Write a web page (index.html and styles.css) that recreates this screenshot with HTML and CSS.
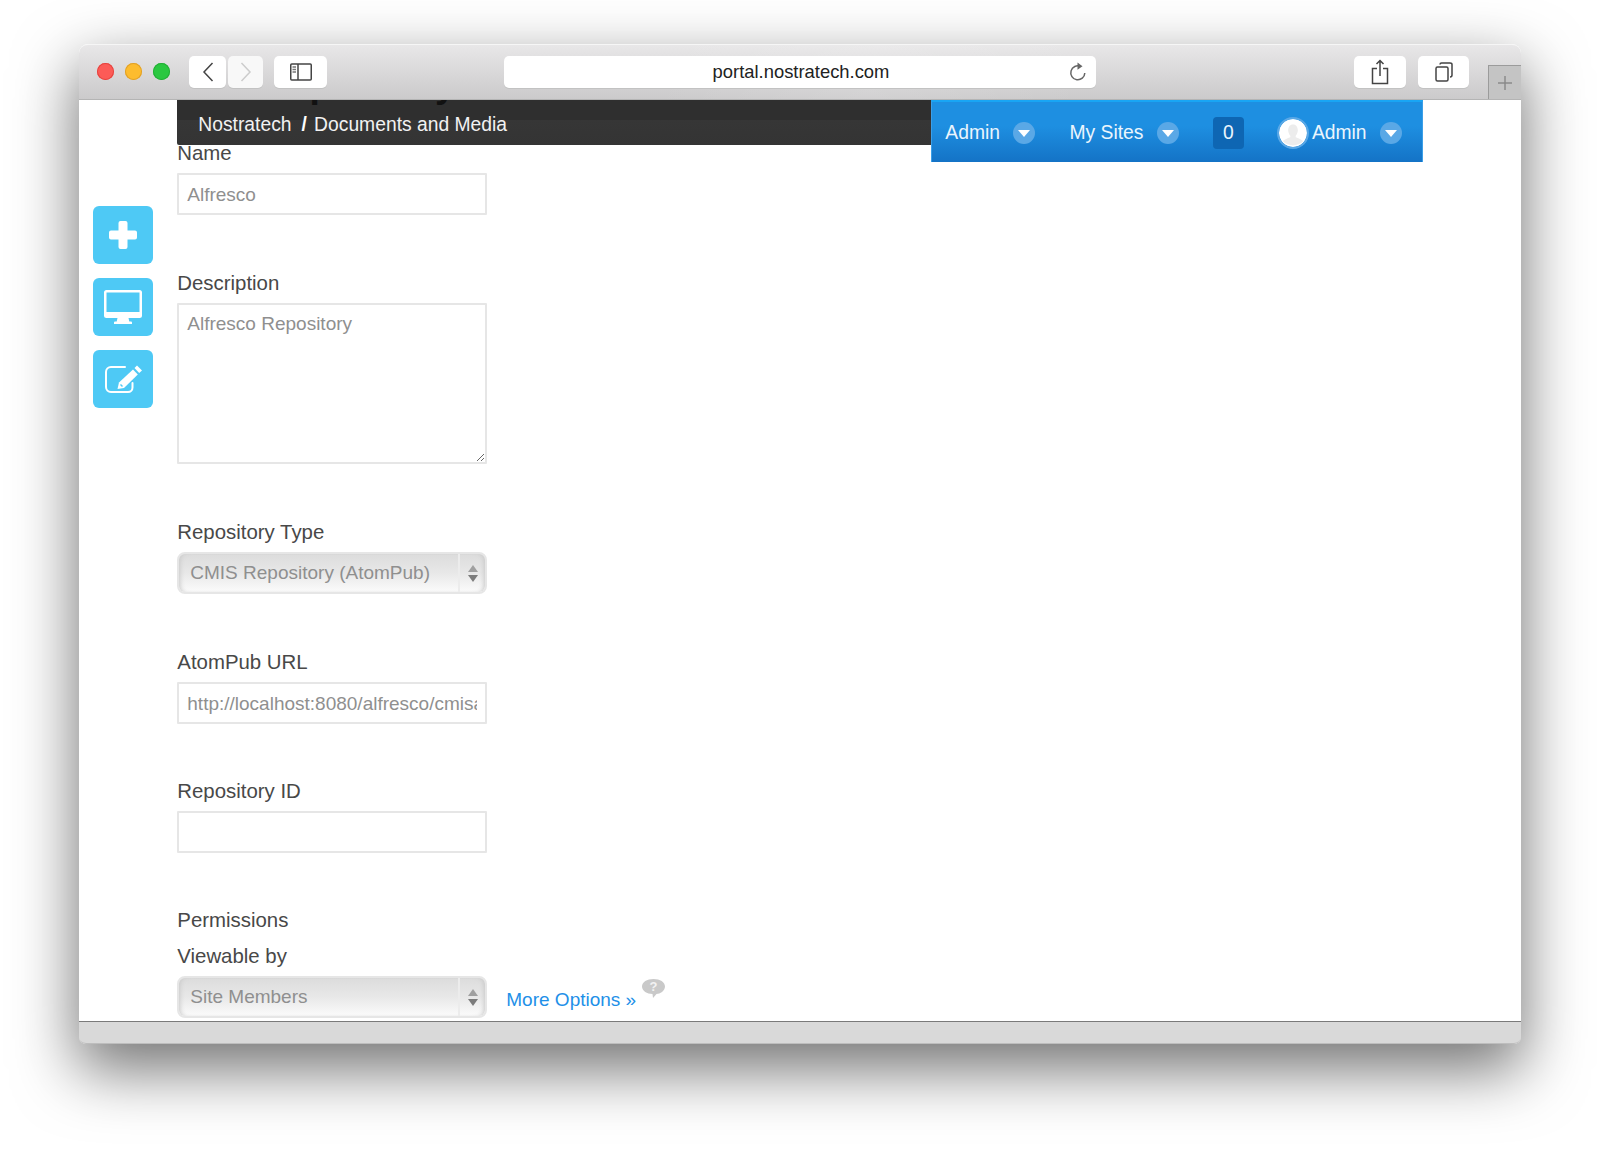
FILE: index.html
```html
<!DOCTYPE html>
<html lang="en">
<head>
<meta charset="utf-8">
<title>portal.nostratech.com</title>
<link rel="stylesheet" href="styles.css">
</head>
<body>
<div class="window">
  <header class="titlebar">
    <div class="lights">
      <span class="light red"></span><span class="light yellow"></span><span class="light green"></span>
    </div>
    <div class="tb-btn back"><svg width="14" height="22" viewBox="0 0 14 22"><path d="M11.5 2 3 11l8.500 9" class="ic" stroke="#444"/></svg></div>
    <div class="tb-btn forward"><svg width="14" height="22" viewBox="0 0 14 22"><path d="M2.500 2 11 11l-8.500 9" class="ic" stroke="#ccc"/></svg></div>
    <div class="tb-btn side"><svg width="22" height="18" viewBox="0 0 22 18"><rect x=".75" y="1" width="20.500" height="16" rx="1" class="ic" stroke="#444"/><path d="M8 1v16" class="ic" stroke="#444"/><path d="M2.500 4H6M2.500 6.500H6M2.500 9H6" class="ic" stroke="#777"/></svg></div>
    <div class="url">
      <span class="url-text">portal.nostratech.com</span>
      <svg class="reload" width="18" height="22" viewBox="0 0 18 22"><path d="M11.500 5.300A7 7 0 1 0 15.800 12" class="ic" stroke="#666" stroke-width="1.300"/><path d="M8.500 1.500 13.500 5.300 8.500 8.800z" fill="#666"/></svg>
    </div>
    <div class="tb-btn share"><svg width="18" height="26" viewBox="0 0 18 26"><path d="M6 9.500H1.500v15h15v-15H12" class="ic" stroke="#444"/><path d="M9 17V1.500M5.500 5 9 1.500 12.500 5" class="ic" stroke="#444"/></svg></div>
    <div class="tb-btn tabs"><svg width="18" height="20" viewBox="0 0 18 20"><rect x="1" y="5" width="12" height="14" rx="1.500" class="ic" stroke="#444"/><path d="M5 2.500Q5 1 6.500 1h8.500Q17 1 17 2.500V13q0 2-2 2" class="ic" stroke="#444"/></svg></div>
    <div class="newtab"><svg width="16" height="16" viewBox="0 0 16 16"><path d="M8 1v14M1 8h14" class="ic" stroke="#8a8a8a"/></svg></div>
  </header>

  <div class="content">
    <main class="main">
      <nav class="sidebtns">
        <a class="sbtn"><svg width="28" height="28" viewBox="0 0 28 28"><path d="M9.500 2a2 2 0 0 1 2-2h5a2 2 0 0 1 2 2v7.500H26a2 2 0 0 1 2 2v5a2 2 0 0 1-2 2H18.500V26a2 2 0 0 1-2 2h-5a2 2 0 0 1-2-2V18.500H2a2 2 0 0 1-2-2v-5a2 2 0 0 1 2-2h7.500z" fill="#fff"/></svg></a>
        <a class="sbtn"><svg width="38" height="34" viewBox="0 0 38 34"><path fill-rule="evenodd" d="M2.500 0h33A2.500 2.500 0 0 1 38 2.500v23a2.500 2.500 0 0 1-2.500 2.500H24.500l.8 3.500H27a1 1 0 0 1 1 1V34H10v-1.500a1 1 0 0 1 1-1h1.700l.8-3.500H2.500A2.500 2.500 0 0 1 0 25.500v-23A2.500 2.500 0 0 1 2.500 0zM2.500 2.500v19.500h33V2.500z" fill="#fff"/></svg></a>
        <a class="sbtn"><svg width="38" height="30" viewBox="0 0 38 30"><path d="M21 3H7a5 5 0 0 0-5 5v15a5 5 0 0 0 5 5h17a4.500 4.500 0 0 0 4.500-4.500V19" fill="none" stroke="#fff" stroke-width="2" stroke-linecap="round"/><path d="M13.500 25 15 18.500 29 5.500l4.800 5L20 24z" fill="#fff"/><path d="M30.500 4 33 1.500l5 5-2.800 2.600z" fill="#fff"/><path d="M16.500 20.500 18.500 22.500" stroke="#4ec9f5" stroke-width="1.500"/></svg></a>
      </nav>

      <form class="form">
        <div class="field field-first">
          <label class="lbl">Name</label>
          <input class="input" type="text" value="Alfresco" readonly>
        </div>
        <div class="field field-area">
          <label class="lbl">Description</label>
          <textarea class="input area" readonly>Alfresco Repository</textarea>
        </div>
        <div class="field field-select">
          <label class="lbl">Repository Type</label>
          <div class="select">
            <span class="select-text">CMIS Repository (AtomPub)</span>
            <span class="select-arrows"><i class="up"></i><i class="down"></i></span>
          </div>
        </div>
        <div class="field">
          <label class="lbl">AtomPub URL</label>
          <input class="input" type="text" value="http://localhost:8080/alfresco/cmisatom" readonly>
        </div>
        <div class="field">
          <label class="lbl">Repository ID</label>
          <input class="input" type="text" value="" readonly>
        </div>
        <div class="perm">Permissions</div>
        <label class="lbl">Viewable by</label>
        <div class="view-row">
          <div class="select">
            <span class="select-text">Site Members</span>
            <span class="select-arrows"><i class="up"></i><i class="down"></i></span>
          </div>
          <a class="more">More Options »</a>
          <svg class="help" width="23" height="19" viewBox="0 0 23 19"><path d="M11.500 0C18 0 23 3 23 7.500S18 15 14.500 15L11 19l-.5-4C5 15 0 12 0 7.500S5 0 11.500 0z" fill="#c9c9c9"/><text x="11.500" y="12" class="help-q">?</text></svg>
        </div>
      </form>
    </main>

    <div class="topbar">
      <div class="crumbs">
        <span class="clipped-title">Repository</span>
        <span class="crumb-text">Nostratech <b class="slash">/</b> Documents and Media</span>
      </div>
      <div class="usernav">
        <span class="nav-text">Admin</span><span class="caret"></span>
        <span class="nav-text gap">My Sites</span><span class="caret"></span>
        <span class="badge">0</span>
        <span class="avatar"><svg width="28" height="28" viewBox="0 0 26 26"><circle cx="13" cy="13" r="13" fill="#fff"/><path d="M13 5c3 0 4.500 2.500 4.500 5.500 0 2-1 4-2 5v1.500c2.500 1 5.500 2 7 3.500A13 13 0 0 1 3.500 20.500c1.500-1.500 4.500-2.500 7-3.500v-1.500c-1-1-2-3-2-5C8.500 7.500 10 5 13 5z" fill="#ececec"/></svg></span>
        <span class="nav-text">Admin</span><span class="caret"></span>
      </div>
    </div>
  </div>
  <footer class="statusbar"></footer>
</div>
</body>
</html>
```
FILE: styles.css
```css
* { box-sizing: border-box; }
html, body { margin: 0; height: 100%; background: #fff; overflow: hidden; }
body { font-family: "Liberation Sans", Arial, sans-serif; }

.window {
  margin: 44px 0 0 79px;
  width: 1442px;
  height: 1000px;
  display: flex;
  flex-direction: column;
  border-radius: 9px 9px 7px 7px;
  box-shadow: 0 24px 62px 2px rgba(0, 0, 0, .55);
  background: #fff;
}

/* title bar */
.titlebar {
  height: 56px;
  flex: none;
  display: flex;
  align-items: center;
  padding: 0 0 1px 18px;
  border-radius: 9px 9px 0 0;
  border-top: 1px solid #f6f6f6;
  border-bottom: 1px solid #b4b4b4;
  background: linear-gradient(100deg, rgba(255,255,255,0) 40%, rgba(255,255,255,.12) 55%, rgba(255,255,255,0) 70%), linear-gradient(180deg, #e8e7e8, #cbcacb);
}
.lights { display: flex; gap: 11px; }
.light { width: 17px; height: 17px; border-radius: 50%; }
.red { background: #fc5b57; box-shadow: inset 0 0 0 1px #e5443f; }
.yellow { background: #fdbc2e; box-shadow: inset 0 0 0 1px #e0a028; }
.green { background: #2ac840; box-shadow: inset 0 0 0 1px #24ae36; }
.tb-btn, .url {
  height: 32px;
  background: #fff;
  border-radius: 5px;
  box-shadow: 0 1px 0 #c2c2c2;
  display: flex;
  align-items: center;
  justify-content: center;
}
.back { width: 37px; margin-left: 19px; }
.forward { width: 35px; margin-left: 2px; background: #f8f8f8; }
.side { width: 53px; margin-left: 11px; }
.url { width: 592px; margin-left: 177px; padding-right: 9px; }
.url-text { flex: 1; text-align: center; font-size: 18.400px; color: #222; padding: 1px 0 0 29px; }
.share { width: 52px; margin-left: 258px; }
.tabs { width: 51px; margin-left: 12px; }
.newtab {
  width: 33px;
  height: 34px;
  margin: 0 0 -1px 19px;
  align-self: flex-end;
  border: 1px solid #9b9b9b;
  border-width: 1px 0 0 1px;
  background: #c4c4c4;
  display: flex;
  align-items: center;
  justify-content: center;
}
.ic { fill: none; stroke-width: 1.500; }

/* page */
.content { flex: 1; position: relative; min-height: 0; overflow: hidden; background: #fff; }
.main { display: flex; height: 100%; padding-left: 14px; }
.sidebtns { width: 60px; flex: none; margin: 106px 24.300px 0 0; display: flex; flex-direction: column; gap: 14px; }
.sbtn {
  height: 58px;
  border-radius: 6px;
  background: #4ec9f5;
  display: flex;
  align-items: center;
  justify-content: center;
}
.form { width: 310px; flex: none; padding-top: 41px; }
.field { margin-bottom: 55px; display: flex; flex-direction: column; }
.field-first { margin-bottom: 56px; }
.field-area { margin-bottom: 56px; }
.field-select { margin-bottom: 56px; }
.lbl, .perm { display: block; font-size: 20.400px; line-height: 24px; color: #484848; height: 24px; margin-bottom: 8px; }
.perm { margin-bottom: 12px; }
.input {
  display: block;
  width: 310px;
  height: 42px;
  border: 2px solid #e6e6e6;
  border-radius: 1px;
  padding: 2px 8px 0;
  font: 19px "Liberation Sans", Arial, sans-serif;
  color: #8f8f8f;
  background: #fff;
  outline: none;
}
.area { height: 161px; padding: 7px 8px; line-height: 24px; }

.select {
  width: 310px;
  height: 42px;
  flex: none;
  display: flex;
  align-items: center;
  border: 2px solid #e6e6e6;
  border-radius: 8px;
  background: linear-gradient(180deg, #dcdcdc, #e8e8e8 50%, #fbfbfb);
  box-shadow: inset 4px 0 5px -3px #c8c8c8, inset -4px 0 5px -3px #c8c8c8;
}
.select-text { flex: 1; padding-left: 11px; font-size: 19px; color: #8f8f8f; }
.select-arrows {
  width: 27px;
  height: 100%;
  border-left: 2px solid #ececec;
  display: flex;
  flex-direction: column;
  align-items: center;
  justify-content: center;
  gap: 3px;
}
.up, .down { width: 0; height: 0; border-left: 5px solid transparent; border-right: 5px solid transparent; }
.up { border-bottom: 7px solid #a0a0a0; }
.down { border-top: 7px solid #7c7c7c; }

.view-row { display: flex; align-items: flex-start; width: 520px; }
.more { margin: 12px 0 0 19px; font-size: 19px; line-height: 24px; color: #1e90e8; white-space: nowrap; }
.help { margin: 3px 0 0 6px; flex: none; }
.help-q { font: bold 13px "Liberation Sans", Arial, sans-serif; fill: #f2f2f2; text-anchor: middle; }

/* overlay nav */
.topbar { position: absolute; top: 0; left: 98.300px; right: 98.200px; display: flex; align-items: flex-start; }
.crumbs {
  flex: 1;
  height: 45px;
  position: relative;
  overflow: hidden;
  padding: 13px 0 0 21px;
  background: linear-gradient(180deg, #2f2f2f 0, #2f2f2f 19px, #282828 19px, #363636 20px, #343434);
  border-radius: 0 0 0 2px;
}
.clipped-title { position: absolute; left: 85px; bottom: 38px; font-size: 37px; line-height: 44px; font-weight: bold; color: #111; }
.crumb-text { position: relative; font-size: 19.300px; line-height: 24px; color: #f2f2f2; display: block; white-space: nowrap; }
.slash { font-weight: bold; color: #fff; margin: 0 2px 0 4.500px; }
.usernav {
  width: 491.500px;
  height: 62px;
  flex: none;
  display: flex;
  align-items: center;
  padding: 1px 0 0 13px;
  border-top: 2px solid #19a5f4;
  border-left: 1px solid #3b9fe8;
  border-right: 1px solid #3b9fe8;
  background: linear-gradient(180deg, #1e8fe1 40%, #1473c6);
  color: #eaf5fd;
}
.nav-text { font-size: 19.300px; white-space: nowrap; }
.gap { margin-left: 34px; }
.caret {
  width: 22px;
  height: 22px;
  margin-left: 13.500px;
  border-radius: 50%;
  background: #5aa8e6;
  position: relative;
  flex: none;
  display: flex;
  align-items: center;
  justify-content: center;
}
.caret::after { content: ""; border-left: 6px solid transparent; border-right: 6px solid transparent; border-top: 7px solid #fff; margin-top: 2px; }
.badge {
  width: 31px;
  height: 32px;
  margin-left: 34px;
  border-radius: 4px;
  background: #0e66b3;
  font-size: 19.300px;
  display: flex;
  align-items: center;
  justify-content: center;
}
.avatar {
  width: 32px;
  height: 32px;
  margin: 0 3px 0 33px;
  border-radius: 50%;
  border: 2px solid #5aa8e6;
  display: flex;
  flex: none;
  overflow: hidden;
}

/* bottom bar */
.statusbar {
  height: 23px;
  flex: none;
  border-top: 1px solid #7a7a7a;
  border-bottom: 1px solid #bdbdbd;
  border-radius: 0 0 7px 7px;
  background: #d9d9d9;
}
```
